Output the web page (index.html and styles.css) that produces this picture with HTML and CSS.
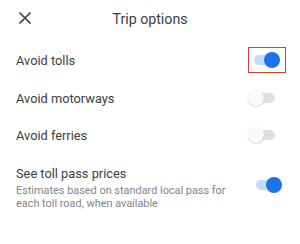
FILE: index.html
```html
<!DOCTYPE html>
<html>
<head>
<meta charset="utf-8">
<link rel="stylesheet" href="styles.css">
</head>
<body>
<div class="page">
  <div class="header">
    <svg class="close" width="14" height="14" viewBox="0 0 14 14"><path d="M1.5 1.5 L12.5 12.5 M12.5 1.5 L1.5 12.5" stroke="#3c4043" stroke-width="1.7" fill="none"/></svg>
    <div class="title">Trip options</div>
  </div>
  <div class="row r1">
    <div class="label">Avoid tolls</div>
    <div class="hl"><div class="toggle on"><span class="track"></span><span class="knob"></span></div></div>
  </div>
  <div class="row r2">
    <div class="label">Avoid motorways</div>
    <div class="toggle off"><span class="track"></span><span class="knob"></span></div>
  </div>
  <div class="row r3">
    <div class="label">Avoid ferries</div>
    <div class="toggle off"><span class="track"></span><span class="knob"></span></div>
  </div>
  <div class="row r4">
    <div class="texts">
      <div class="label">See toll pass prices</div>
      <div class="sub">Estimates based on standard local pass for each toll road, when available</div>
    </div>
    <div class="toggle on"><span class="track"></span><span class="knob"></span></div>
  </div>
</div>
</body>
</html>
```
FILE: styles.css
```css
html, body { margin: 0; padding: 0; background: #fff; }
body { width: 300px; height: 244px; overflow: hidden; font-family: Roboto, "Liberation Sans", sans-serif; color: #3c4043; }
.page { display: flex; flex-direction: column; }
.header { position: relative; height: 37px; display: flex; align-items: center; justify-content: center; }
.close { position: absolute; left: 18px; top: 11px; }
.title { font-size: 14.2px; color: #3c4043; }
.row { display: flex; align-items: center; justify-content: space-between; padding: 0 16px; }
.r1 { height: 46px; }
.r2 { height: 30px; }
.r3 { height: 44px; }
.label { font-size: 12.8px; color: #3c4043; }
.sub { font-size: 10.9px; color: #80868b; line-height: 12.5px; margin-top: 4px; width: 230px; }
.texts { padding-top: 9px; }
.r4 { align-items: flex-start; }
.r4 .toggle { margin-top: 20px; margin-right: 1px; }
.hl { border: 1.5px solid #d93a3a; padding: 4px 4px; margin-right: -2px; display: flex; }
.toggle { position: relative; width: 28px; height: 16px; }
.track { position: absolute; left: 1px; top: 3px; width: 24px; height: 10px; border-radius: 5px; }
.knob { position: absolute; top: 0; width: 16px; height: 16px; border-radius: 50%; }
.on .track { background: #c6dafc; }
.on .knob { left: 11px; background: #1a73e8; }
.off .track { background: #e0e0e0; left: 3px; }
.off .knob { left: 0; background: #fafafa; box-shadow: 0 0.5px 1.5px rgba(0,0,0,0.25); }
.r2 .toggle, .r3 .toggle { margin-right: 8px; }
```
